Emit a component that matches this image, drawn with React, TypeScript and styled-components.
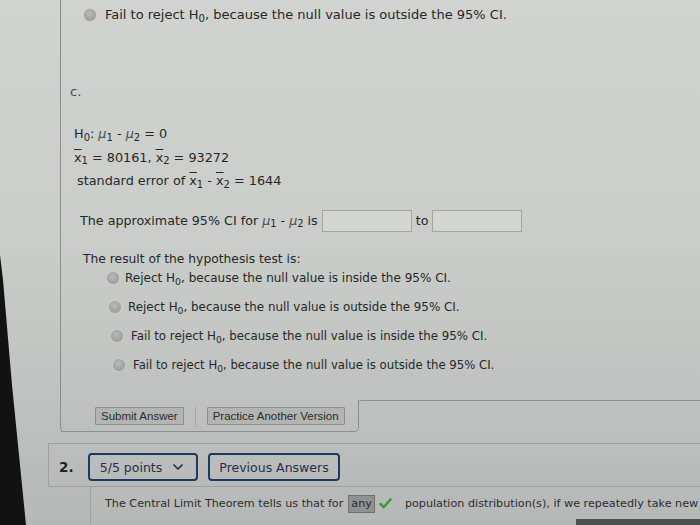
import React from "react";
import styled, { createGlobalStyle } from "styled-components";
import { ChevronDown } from "lucide-react";

const Global = createGlobalStyle`
  html, body { margin: 0; padding: 0; }
  body {
    width: 700px;
    height: 525px;
    overflow: hidden;
    font-family: "DejaVu Sans", Verdana, sans-serif;
    color: #262827;
  }
`;

const Page = styled.div`
  position: relative;
  width: 700px;
  height: 525px;
  overflow: hidden;
  background: linear-gradient(180deg, #d1d3d0 0%, #cacdca 45%, #bfc2c0 75%, #b5b8b7 100%);
`;

const Bezel = styled.div`
  position: absolute;
  left: 0;
  top: 0;
  width: 30px;
  height: 525px;
  background: #121212;
  clip-path: polygon(0 255px, 3px 280px, 12px 385px, 26px 525px, 0 525px);
`;

const Panel = styled.div`
  margin-left: 60px;
  width: 640px;
  border-left: 1px solid #8d8f8d;
  border-bottom-left-radius: 5px;
`;

const Option = styled.div<{ $indent: number; $gap: number; $size: number }>`
  display: flex;
  align-items: center;
  gap: ${(p) => p.$gap}px;
  padding-left: ${(p) => p.$indent}px;
  height: 29px;
  font-size: ${(p) => p.$size}px;
  white-space: nowrap;
`;

const Radio = styled.span`
  width: 12px;
  height: 12px;
  border-radius: 50%;
  flex: none;
  background: radial-gradient(circle at 45% 40%, #b9bbb9 0%, #9c9e9c 70%, #8e908e 100%);
  box-shadow: 0 0 0 1px #c9cbc9;
`;

const Sub = styled.span`
  font-size: 0.78em;
  position: relative;
  top: 0.3em;
`;

const Mu = styled.span`
  font-style: italic;
  color: #4a4c4b;
`;

const Bar = styled.span`
  text-decoration: overline;
`;

const PartLabel = styled.div`
  padding: 0 0 0 9px;
  margin-top: 55px;
  height: 20px;
  font-size: 13px;
  color: #4a4c4b;
`;

const Given = styled.div`
  margin-top: 18px;
  padding-left: 12px;
  display: flex;
  flex-direction: column;
  font-size: 12.8px;
`;

const GivenLine = styled.div<{ $shift: number }>`
  height: 23.5px;
  line-height: 23.5px;
  padding-left: ${(p) => p.$shift}px;
  white-space: nowrap;
`;

const CIRow = styled.div`
  margin-top: 16px;
  padding-left: 19px;
  display: flex;
  align-items: center;
  height: 24px;
  font-size: 12.7px;
  white-space: nowrap;
`;

const AnswerBox = styled.span`
  display: inline-block;
  width: 88px;
  height: 20px;
  margin: 0 4px 0 4px;
  background: #d3d6d2;
  border: 1px solid #a3a6a3;
`;

const ResultHead = styled.div`
  margin-top: 17px;
  padding-left: 22px;
  font-size: 12.3px;
  height: 18px;
  line-height: 18px;
`;

const Options = styled.div`
  display: flex;
  flex-direction: column;
  margin-top: -4px;
`;

const Footer = styled.div`
  display: flex;
  margin-top: 20px;
  height: 32px;
`;

const ButtonArea = styled.div`
  display: flex;
  align-items: flex-start;
  padding: 7px 0 0 34px;
  width: 263px;
  border-bottom: 1px solid #8d8f8d;
  border-right: 1px solid #8d8f8d;
  border-bottom-right-radius: 5px;
`;

const Filler = styled.div`
  flex: 1;
  border-top: 1px solid #8d8f8d;
  border-top-left-radius: 4px;
  margin-left: -1px;
`;

const GrayButton = styled.button`
  font-family: "Liberation Sans", Arial, sans-serif;
  font-size: 11.5px;
  color: #2a2b2b;
  height: 18px;
  padding: 0 5px;
  background: #b3b5b3;
  border: 1px solid #8e908e;
  border-radius: 1px;
  white-space: nowrap;
`;

const Divider = styled.span`
  width: 1px;
  height: 20px;
  margin: 0 11px 0 11px;
  background: #a5a7a5;
`;

const Q2Header = styled.div`
  margin-top: 11px;
  margin-left: 48px;
  height: 44px;
  box-sizing: border-box;
  padding-top: 5px;
  display: flex;
  align-items: center;
  border-top: 1px solid #9fa2a0;
  border-left: 1px solid #9fa2a0;
  border-bottom: 1px solid #9fa2a0;
`;

const QNum = styled.span`
  width: 39px;
  padding-left: 10px;
  box-sizing: border-box;
  font-weight: bold;
  font-size: 13.5px;
  color: #222;
`;

const OutlineButton = styled.button<{ $w: number }>`
  display: flex;
  align-items: center;
  justify-content: center;
  gap: 8px;
  width: ${(p) => p.$w}px;
  height: 28px;
  margin-right: 10px;
  font-family: "DejaVu Sans", Verdana, sans-serif;
  font-size: 12.5px;
  color: #1f3047;
  background: transparent;
  border: 2px solid #1d3a5c;
  border-radius: 4px;
`;

const Q2Body = styled.div`
  margin-left: 90px;
  border-left: 1px solid #9fa2a0;
  height: 40px;
  display: flex;
  flex-direction: column;
`;

const BodyLine = styled.div`
  display: flex;
  align-items: center;
  height: 32px;
  padding: 2px 0 0 14px;
  box-sizing: border-box;
  font-size: 11.2px;
  white-space: nowrap;
  color: #2c2e2d;
`;

const Chosen = styled.span`
  display: inline-block;
  margin-left: 5px;
  padding: 0 2px;
  height: 16px;
  line-height: 16px;
  background: #8f9290;
  border: 1px solid #6e716f;
  color: #2a2c2b;
`;

const Check = styled.span`
  display: inline-flex;
  margin: 0 13px 0 4px;
`;

const DarkBar = styled.div`
  align-self: flex-end;
  width: 124px;
  height: 8px;
  background: #4e504f;
`;

const options = [
  { indent: 46, gap: 6, a: "Reject ", b: ", because the null value is inside the 95% CI." },
  { indent: 48, gap: 7, a: "Reject ", b: ", because the null value is outside the 95% CI." },
  { indent: 50, gap: 8, a: "Fail to reject ", b: ", because the null value is inside the 95% CI." },
  { indent: 52, gap: 8, a: "Fail to reject ", b: ", because the null value is outside the 95% CI." },
];

export default function App() {
  return (
    <Page>
      <Global />
      <Panel>
        <Option $indent={23} $gap={9} $size={13}>
          <Radio />
          <span>
            Fail to reject H<Sub>0</Sub>, because the null value is outside the 95% CI.
          </span>
        </Option>
        <PartLabel>c.</PartLabel>
        <Given>
          <GivenLine $shift={1}>
            H<Sub>0</Sub>: <Mu>μ</Mu><Sub>1</Sub> - <Mu>μ</Mu><Sub>2</Sub> = 0
          </GivenLine>
          <GivenLine $shift={1}>
            <Bar>x</Bar><Sub>1</Sub> = 80161, <Bar>x</Bar><Sub>2</Sub> = 93272
          </GivenLine>
          <GivenLine $shift={4}>
            standard error of <Bar>x</Bar><Sub>1</Sub> - <Bar>x</Bar><Sub>2</Sub> = 1644
          </GivenLine>
        </Given>
        <CIRow>
          The approximate 95% CI for&nbsp;<Mu>μ</Mu><Sub>1</Sub>&nbsp;-&nbsp;<Mu>μ</Mu><Sub>2</Sub>&nbsp;is
          <AnswerBox />
          to
          <AnswerBox />
        </CIRow>
        <ResultHead>The result of the hypothesis test is:</ResultHead>
        <Options>
          {options.map((o, i) => (
            <Option key={i} $indent={o.indent} $gap={o.gap} $size={12 - i * 0.1}>
              <Radio />
              <span>
                {o.a}H<Sub>0</Sub>
                {o.b}
              </span>
            </Option>
          ))}
        </Options>
        <Footer>
          <ButtonArea>
            <GrayButton>Submit Answer</GrayButton>
            <Divider />
            <GrayButton>Practice Another Version</GrayButton>
          </ButtonArea>
          <Filler />
        </Footer>
      </Panel>
      <Q2Header>
        <QNum>2.</QNum>
        <OutlineButton $w={110}>
          5/5 points
          <ChevronDown size={16} strokeWidth={2.5} />
        </OutlineButton>
        <OutlineButton $w={132}>Previous Answers</OutlineButton>
      </Q2Header>
      <Q2Body>
        <BodyLine>
          The Central Limit Theorem tells us that for
          <Chosen>any</Chosen>
          <Check>
            <svg width="13" height="11" viewBox="0 0 14 12">
              <path d="M1.5 6.5 L5 10 L12.5 1.5" fill="none" stroke="#3d9a3a" strokeWidth="2.6" strokeLinecap="round" strokeLinejoin="round" />
            </svg>
          </Check>
          population distribution(s), if we repeatedly take new r
        </BodyLine>
        <DarkBar />
      </Q2Body>
      <Bezel />
    </Page>
  );
}
